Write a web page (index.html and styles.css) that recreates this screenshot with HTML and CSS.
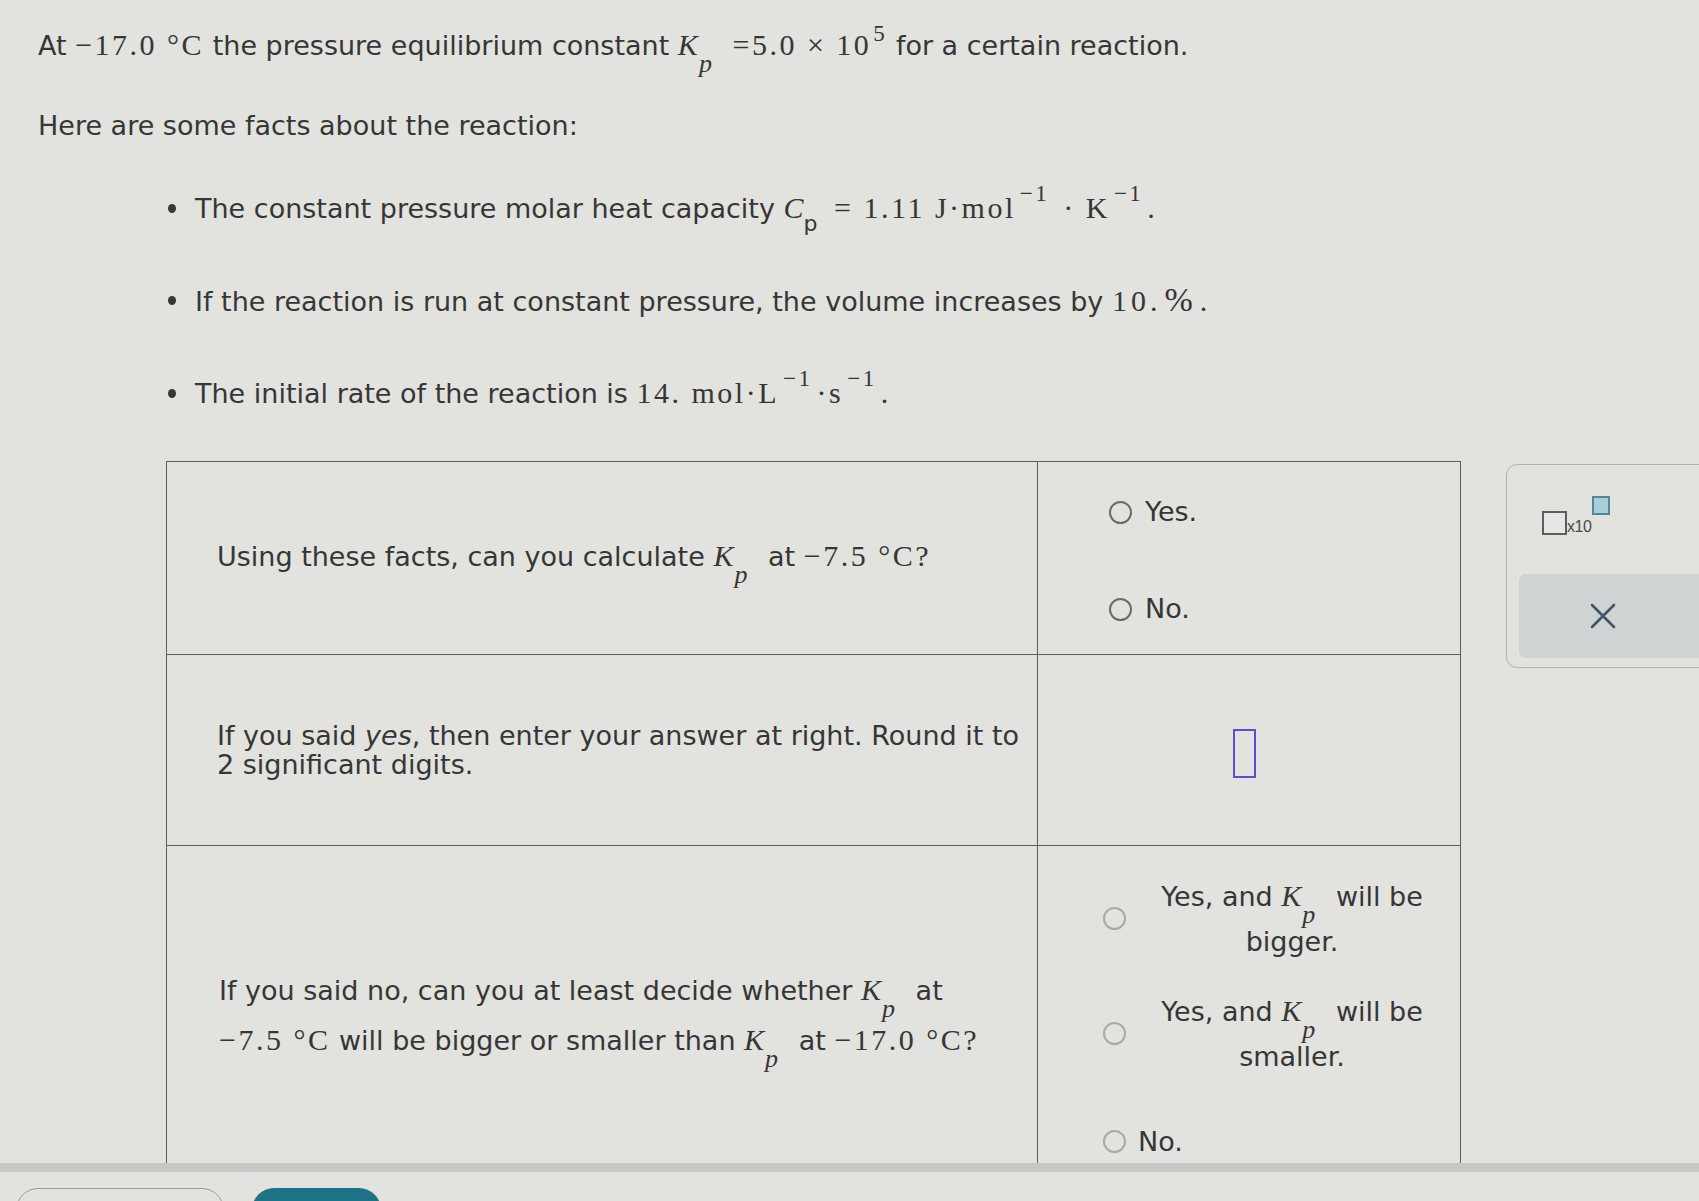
FILE: index.html
```html
<!DOCTYPE html>
<html lang="en">
<head>
<meta charset="utf-8">
<title>Equilibrium constant question</title>
<link rel="stylesheet" href="styles.css">
</head>
<body>
<div class="workspace">
  <div class="question">
    <p class="line first">At <span class="m">−17.0 °C</span> the pressure equilibrium constant <span class="kp"><i>K</i><sub>p</sub></span> <span class="m">=5.0 × 10<sup class="exp">5</sup></span> for a certain reaction.</p>
    <p class="line here">Here are some facts about the reaction:</p>
    <ul class="facts">
      <li>The constant pressure molar heat capacity <span class="cp"><i>C</i><sub>p</sub></span> <span class="m">= 1.11 J·mol<sup class="neg">−1</sup> · K<sup class="neg">−1</sup>.</span></li>
      <li>If the reaction is run at constant pressure, the volume increases by <span class="m pctval">10.<span class="pct">%</span>.</span></li>
      <li>The initial rate of the reaction is <span class="m">14. mol·L<sup class="neg">−1</sup>·s<sup class="neg">−1</sup>.</span></li>
    </ul>
    <table class="qtable">
      <tr class="r1">
        <td class="ask">Using these facts, can you calculate <span class="kp"><i>K</i><sub>p</sub></span> at <span class="m">−7.5 °C?</span></td>
        <td class="ans">
          <div class="opts">
            <label class="opt"><span class="radio"></span>Yes.</label>
            <label class="opt"><span class="radio"></span>No.</label>
          </div>
        </td>
      </tr>
      <tr class="r2">
        <td class="ask">If you said <em>yes</em>, then enter your answer at right. Round it to<br>2 significant digits.</td>
        <td class="ans center"><span class="input"></span></td>
      </tr>
      <tr class="r3">
        <td class="ask tall">If you said no, can you at least decide whether <span class="kp"><i>K</i><sub>p</sub></span> at<br><span class="m">−7.5 °C</span> will be bigger or smaller than <span class="kp"><i>K</i><sub>p</sub></span> at <span class="m">−17.0 °C?</span></td>
        <td class="ans">
          <div class="opts3">
            <label class="opt3"><span class="radio light"></span><span class="otext">Yes, and <span class="kp"><i>K</i><sub>p</sub></span> will be<br>bigger.</span></label>
            <label class="opt3"><span class="radio light"></span><span class="otext">Yes, and <span class="kp"><i>K</i><sub>p</sub></span> will be<br>smaller.</span></label>
            <label class="opt3 no"><span class="radio light"></span>No.</label>
          </div>
        </td>
      </tr>
    </table>
  </div>
  <aside class="tools">
    <div class="panel">
      <div class="sci">
        <span class="base"></span><span class="x10">x10</span><span class="power"></span>
      </div>
      <div class="clear">
        <svg width="28" height="28" viewBox="0 0 28 28"><path d="M3 3 L25 25 M25 3 L3 25" stroke="#3f5566" stroke-width="2.6" fill="none" stroke-linecap="round"/></svg>
      </div>
    </div>
  </aside>
</div>
<footer class="footer">
  <span class="btn outline"></span>
  <span class="btn teal"></span>
</footer>
</body>
</html>
```
FILE: styles.css
```css
html, body {
  margin: 0;
  padding: 0;
}
body {
  width: 1699px;
  height: 1201px;
  overflow: hidden;
  background: #e2e2de;
  font-family: "DejaVu Sans", Verdana, sans-serif;
  font-size: 27px;
  color: #363636;
}
.workspace {
  display: flex;
  height: 1163px;
  overflow: hidden;
}
.question {
  flex: 0 0 1506px;
  box-sizing: border-box;
  padding: 25px 0 0 38px;
}
.line {
  margin: 0;
  line-height: 40px;
  white-space: nowrap;
}
.here {
  margin-top: 40px;
}
.m {
  font-family: "Liberation Serif", "Times New Roman", serif;
  font-size: 30px;
  letter-spacing: 2.5px;
}
.pctval {
  letter-spacing: 4px;
}
.pct {
  font-size: 34px;
  margin: 0 3px;
}
.kp, .cp {
  font-family: "Liberation Serif", "Times New Roman", serif;
  font-size: 30px;
  margin-right: 12px;
}
.kp i, .cp i {
  font-style: italic;
}
.kp sub {
  font-style: italic;
  font-size: 26px;
  vertical-align: -17px;
  margin-left: 1px;
}
.cp sub {
  font-family: "DejaVu Sans", sans-serif;
  font-size: 22px;
  vertical-align: -13px;
}
.cp {
  margin-right: 8px;
}
sub, sup {
  line-height: 0;
}
.exp {
  font-size: 23px;
  vertical-align: 14px;
  margin-left: 2px;
}
.neg {
  font-size: 23px;
  vertical-align: 17px;
  margin-left: 4px;
  margin-right: 4px;
}
.facts {
  list-style: none;
  margin: 42px 0 0 0;
  padding: 0 0 0 157px;
}
.facts li {
  position: relative;
  line-height: 40px;
  margin-bottom: 51px;
  white-space: nowrap;
}
.facts li:last-child {
  margin-bottom: 47px;
}
.facts li::before {
  content: "";
  position: absolute;
  left: -27px;
  top: 16px;
  width: 8px;
  height: 9px;
  border-radius: 50%;
  background: #363636;
}
.qtable {
  margin-left: 128px;
  width: 1295px;
  border-collapse: collapse;
}
.qtable td {
  border: 1.5px solid #5e5e5e;
  vertical-align: middle;
  padding: 0;
}
.qtable .ask {
  width: 871px;
  box-sizing: border-box;
  padding-left: 50px;
  line-height: 29px;
}
.qtable .ask.tall {
  line-height: 49px;
  padding-left: 52px;
}
.r1 td { height: 193px; }
.r2 td { height: 191px; }
.r3 td { height: 338px; }
.ans {
  box-sizing: border-box;
}
.ans.center {
  text-align: center;
}
.opts {
  display: flex;
  flex-direction: column;
  gap: 67px;
  padding-left: 71px;
  padding-top: 5px;
}
.opt {
  display: flex;
  align-items: center;
  gap: 13px;
  line-height: 30px;
}
.radio {
  display: inline-block;
  width: 19px;
  height: 19px;
  border: 2px solid #6a6a6a;
  border-radius: 50%;
  flex: 0 0 auto;
}
.radio.light {
  border-color: #a9a9a9;
}
.input {
  display: inline-block;
  width: 19px;
  height: 45px;
  border: 2px solid #5a4fd4;
  vertical-align: middle;
  margin: 6px 10px 0 0;
}
.opts3 {
  display: flex;
  flex-direction: column;
  gap: 24px;
  padding-left: 65px;
}
.opt3 {
  display: flex;
  align-items: center;
}
.opt3 .otext {
  width: 300px;
  margin-left: 16px;
  text-align: center;
  line-height: 45px;
  white-space: nowrap;
}
.opt3.no {
  gap: 12px;
  margin-top: 24px;
  line-height: 30px;
}
.tools {
  flex: 0 0 230px;
  padding-top: 464px;
}
.panel {
  height: 204px;
  width: 230px;
  border: 1.5px solid #b3b3b3;
  border-radius: 11px;
  box-sizing: border-box;
  padding: 31px 0 0 12px;
}
.sci {
  display: flex;
  align-items: flex-start;
  padding-left: 23px;
  height: 50px;
}
.base {
  margin-top: 15px;
  width: 21px;
  height: 20px;
  border: 2px solid #5a5d62;
  background: #e6e6e4;
}
.x10 {
  margin-top: 22px;
  font-family: "Liberation Sans", Arial, sans-serif;
  font-size: 16px;
  color: #4a4a4a;
  letter-spacing: -0.5px;
}
.power {
  margin-left: 1px;
  width: 14px;
  height: 15px;
  border: 2px solid #54879a;
  background: #a9cfd8;
}
.clear {
  margin-top: 28px;
  height: 84px;
  background: #d0d3d3;
  border-radius: 6px 0 0 6px;
  display: flex;
  align-items: center;
  padding-left: 70px;
}
.footer {
  height: 38px;
  border-top: 9px solid #c6c8c7;
  display: flex;
  gap: 28px;
  padding: 16px 0 0 16px;
  overflow: hidden;
}
.btn {
  display: block;
  height: 50px;
  border-radius: 22px;
  box-sizing: border-box;
}
.btn.outline {
  width: 208px;
  border: 1.5px solid #9a9a9a;
}
.btn.teal {
  width: 129px;
  background: #1d7385;
}
```
